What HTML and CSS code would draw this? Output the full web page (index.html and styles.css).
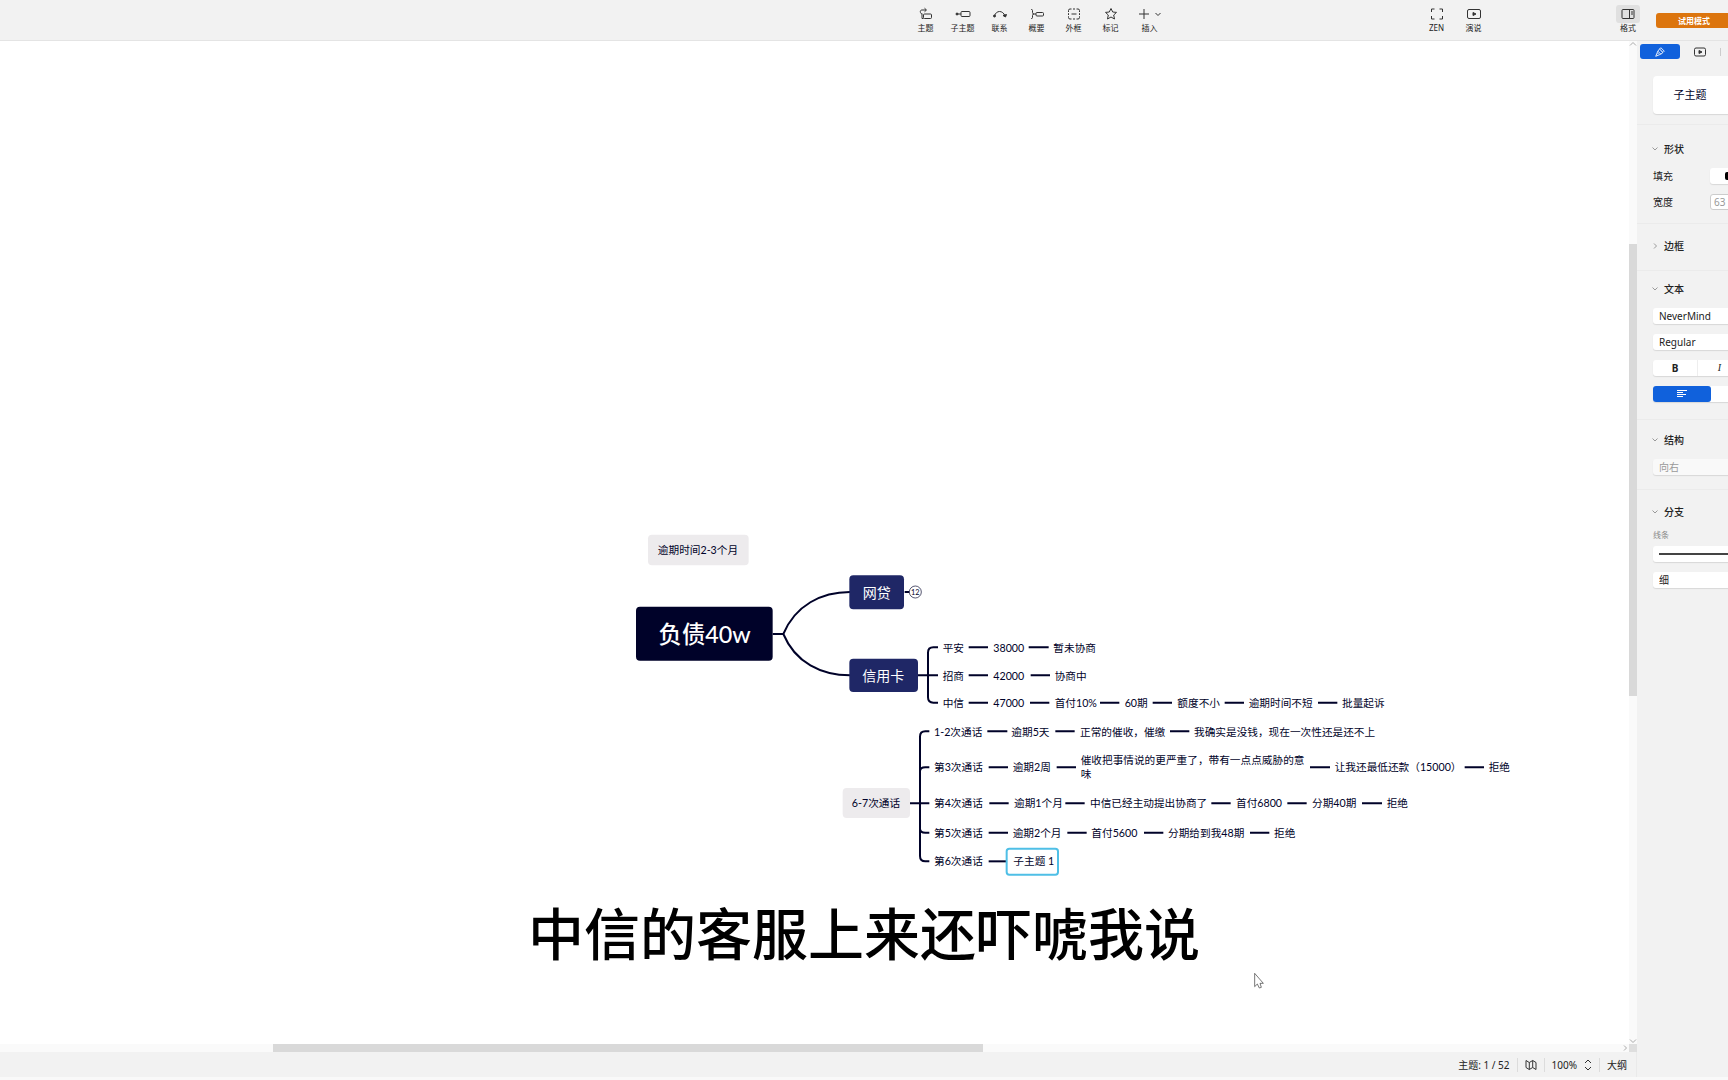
FILE: index.html
```html
<!DOCTYPE html>
<html lang="zh-CN">
<head>
<meta charset="utf-8">
<title>负债40w</title>
<link rel="stylesheet" href="styles.css">
</head>
<body>
<div class="app">
  <header class="toolbar">
    <div class="tool-group">
      <button class="tool"><svg class="icon" viewBox="0 0 16 14"><path d="M4 6.500V11.500H5.500M4 7C2 6.500 1.500 3 4 3H8M6.500 1.200 8.500 3 6.500 4.800"/><rect x="5.500" y="7" width="8" height="4.500" rx="1"/></svg>主题</button>
      <button class="tool"><svg class="icon" viewBox="0 0 16 14"><rect x="6" y="4.500" width="9" height="5" rx="1"/><path d="M2 7H6"/><circle class="solid" cx="2" cy="7" r="1"/></svg>子主题</button>
      <button class="tool"><svg class="icon" viewBox="0 0 16 14"><path d="M2.500 9C4 3 11 3 13 9"/><circle class="solid" cx="2.500" cy="9" r="1"/><path class="solid" d="M11 8.500 14.500 7.500 13.500 10Z"/></svg>联系</button>
      <button class="tool"><svg class="icon" viewBox="0 0 16 14"><path d="M2 2.500H2.500Q3.500 2.500 3.500 3.500V5.500Q3.500 7 5 7Q3.500 7 3.500 8.500V10.500Q3.500 11.500 2.500 11.500H2M5 7H7"/><rect x="7" y="5.500" width="7.500" height="3.500" rx="1"/></svg>概要</button>
      <button class="tool"><svg class="icon" viewBox="0 0 16 14"><path d="M2.500 5V3.500Q2.500 2 4 2H5.500M7 2H9M10.500 2H12Q13.500 2 13.500 3.500V5M13.500 6.200V8M13.500 9.300V10.500Q13.500 12 12 12H10.500M9 12H7M5.500 12H4Q2.500 12 2.500 10.500V9.300M2.500 8V6.200M5.500 7H10.500"/></svg>外框</button>
      <button class="tool"><svg class="icon" viewBox="0 0 16 14"><path d="M8 1.500 9.700 5 13.500 5.400 10.700 8 11.500 12 8 10 4.500 12 5.300 8 2.500 5.400 6.300 5Z"/></svg>标记</button>
      <button class="tool tool-insert"><svg class="icon icon-wide" viewBox="0 0 24 14"><path d="M1 7H11M6 2V12M17.500 6 20 8.500 22.500 6"/></svg>插入</button>
    </div>
    <div class="tool-group view-group">
      <button class="tool"><svg class="icon" viewBox="0 0 16 14"><path d="M2.500 5V2H5.500M10.500 2H13.500V5M13.500 9V12H10.500M5.500 12H2.500V9"/></svg>ZEN</button>
      <button class="tool"><svg class="icon" viewBox="0 0 16 14"><rect x="1.500" y="2.500" width="13" height="9" rx="1.500"/><path class="solid" d="M7 5.500 10 7 7 8.500Z"/></svg>演说</button>
    </div>
    <button class="tool tool-active"><svg class="icon" viewBox="0 0 16 14"><rect x="2" y="2.500" width="12" height="9" rx="1"/><path d="M9.500 2.500V11.500M11 5H13M11 7H13"/></svg>格式</button>
    <div class="trial-slot"><button class="trial">试用模式</button></div>
  </header>

  <div class="work">
    <div class="editor">
      <main class="canvas">
        <svg class="map" viewBox="0 63 2442 1503" width="1628" height="1002">
          <g class="links">
            <path d="M1159 951H1175M1175 951C1193 908 1232 888 1275 888M1175 951C1193 994 1232 1013 1275 1013"/>
            <path d="M1357 888H1364M1377 1013H1407M1407 971H1400Q1392 971 1392 979V1046Q1392 1054 1400 1054H1407"/>
            <path d="M1453 971H1482M1543 971H1573"/>
            <path d="M1453 1013H1482M1546 1013H1575"/>
            <path d="M1453 1054H1482M1545 1054H1574M1650 1054H1679M1729 1054H1758M1837 1054H1866M1977 1054H2006"/>
            <path d="M1365 1205H1394M1394 1097H1388Q1380 1097 1380 1105V1284Q1380 1292 1388 1292H1394M1380 1157Q1380 1151 1388 1151H1394M1380 1243Q1380 1249 1388 1249H1394"/>
            <path d="M1481 1097H1511M1583 1097H1612M1755 1097H1784"/>
            <path d="M1483 1151H1512M1585 1151H1614M1965 1151H1995M2197 1151H2226"/>
            <path d="M1484 1205H1513M1598 1205H1627M1817 1205H1846M1931 1205H1960M2043 1205H2073"/>
            <path d="M1483 1249H1512M1601 1249H1630M1716 1249H1745M1875 1249H1904"/>
            <path d="M1483 1292H1512"/>
          </g>
          <rect class="note" x="972" y="802" width="151" height="46" rx="6"/>
          <text class="topic mid" x="1047" y="831">逾期时间2-3个月</text>
          <rect class="root-box" x="954" y="910" width="205" height="81" rx="6"/>
          <text class="root-text mid" x="1057" y="964">负债40w</text>
          <rect class="main-box" x="1274" y="863" width="82" height="51" rx="6"/>
          <text class="main-text mid" x="1315" y="897">网贷</text>
          <circle class="fold" cx="1373" cy="888" r="9"/>
          <text class="fold-text mid" x="1373" y="892">12</text>
          <rect class="main-box" x="1274" y="988" width="103" height="50" rx="6"/>
          <text class="main-text mid" x="1325" y="1021">信用卡</text>
          <g class="topic">
            <text x="1414" y="978">平安</text><text x="1490" y="978">38000</text><text x="1580" y="978">暂未协商</text>
            <text x="1414" y="1020">招商</text><text x="1490" y="1020">42000</text><text x="1582" y="1020">协商中</text>
            <text x="1414" y="1061">中信</text><text x="1490" y="1061">47000</text><text x="1582" y="1061">首付10%</text><text x="1687" y="1061">60期</text><text x="1766" y="1061">额度不小</text><text x="1873" y="1061">逾期时间不短</text><text x="2013" y="1061">批量起诉</text>
          </g>
          <rect class="note" x="1264" y="1182" width="101" height="45" rx="6"/>
          <text class="topic mid" x="1314" y="1211">6-7次通话</text>
          <g class="topic">
            <text x="1401" y="1104">1-2次通话</text><text x="1517" y="1104">逾期5天</text><text x="1620" y="1104">正常的催收，催缴</text><text x="1791" y="1104">我确实是没钱，现在一次性还是还不上</text>
            <text x="1401" y="1157">第3次通话</text><text x="1519" y="1157">逾期2周</text>
            <text x="1621" y="1146">催收把事情说的更严重了，带有一点点威胁的意<tspan x="1621" y="1167">味</tspan></text>
            <text x="2002" y="1157">让我还最低还款（15000）</text><text x="2233" y="1157">拒绝</text>
            <text x="1401" y="1211">第4次通话</text><text x="1521" y="1211">逾期1个月</text><text x="1635" y="1211">中信已经主动提出协商了</text><text x="1854" y="1211">首付6800</text><text x="1968" y="1211">分期40期</text><text x="2080" y="1211">拒绝</text>
            <text x="1401" y="1255">第5次通话</text><text x="1519" y="1255">逾期2个月</text><text x="1637" y="1255">首付5600</text><text x="1752" y="1255">分期给到我48期</text><text x="1911" y="1255">拒绝</text>
            <text x="1401" y="1298">第6次通话</text>
          </g>
          <rect class="selected" x="1510" y="1273" width="77" height="39" rx="4"/>
          <text class="topic" x="1520" y="1298">子主题 1</text>
          <path class="cursor" d="M1882 1460V1480L1886 1476 1889 1482 1892 1481 1890 1475H1895Z"/>
        </svg>
      </main>
      <div class="vbar"><svg class="arrow" viewBox="0 0 8 6"><path d="M1 4.500 4 1.500 7 4.500"/></svg><div class="vspace"></div><div class="vthumb"></div><div class="vrest"></div><svg class="arrow" viewBox="0 0 8 6"><path d="M1 1.500 4 4.500 7 1.500"/></svg></div>
      <div class="hbar"><div class="hthumb"></div><svg class="arrow" viewBox="0 0 8 6"><path d="M3 0.500 5.500 3 3 5.500"/></svg></div>
      <div class="corner"></div>
      <footer class="status">
        <span class="cell">主题: 1 / 52</span>
        <button class="cell" aria-label="导航图"><svg class="map-icon" viewBox="0 0 12 12"><path d="M1 1.500 4.300 3.500 7.700 1.500V8.500L4.300 10.500 1 8.500ZM4.300 3.500V10.500M7.700 1.500 11 3.500V10.500L7.700 8.500"/></svg></button>
        <button class="cell zoom-level">100%<svg class="updown" viewBox="0 0 8 12"><path d="M1 4 4 1 7 4M1 8 4 11 7 8"/></svg></button>
        <button class="cell">大纲</button>
      </footer>
    </div>

    <aside class="side">
      <div class="side-body">
        <div class="tabs">
          <button class="tab tab-on" aria-label="样式"><svg class="tab-icon" viewBox="0 0 14 14"><path d="M8 2 12 6 10.500 7.500 6.500 3.500ZM6.500 3.500 4.500 6 8 9.500 10.500 7.500M4.500 6 2 12 8 9.500M4 9.500 5.500 8M8 5.500 9 6.500"/></svg></button>
          <button class="tab" aria-label="演说"><svg class="icon" viewBox="0 0 16 14"><rect x="2.500" y="3" width="11" height="8" rx="1.500"/><path class="solid" d="M7 5.500 10 7 7 8.500Z"/></svg></button>
          <span class="tab-sep"></span>
        </div>
        <button class="preview">子主题</button>
        <section class="sec sec-shape">
          <h2 class="head"><svg class="chev" viewBox="0 0 8 6"><path d="M1.500 1.500 4 4 6.500 1.500"/></svg>形状</h2>
          <div class="row"><span class="name">填充</span><button class="swatch" aria-label="填充颜色"><span class="ink"></span></button></div>
          <div class="row"><label class="name" for="w">宽度</label><input class="num" id="w" value="63"></div>
        </section>
        <section class="sec sec-border">
          <h2 class="head"><svg class="chev" viewBox="0 0 8 6"><path d="M3 .500 5.500 3 3 5.500"/></svg>边框</h2>
        </section>
        <section class="sec sec-text">
          <h2 class="head"><svg class="chev" viewBox="0 0 8 6"><path d="M1.500 1.500 4 4 6.500 1.500"/></svg>文本</h2>
          <div class="row"><select class="field" aria-label="字体"><option>NeverMind</option></select></div>
          <div class="row"><select class="field" aria-label="字重"><option>Regular</option></select></div>
          <div class="row"><div class="segs"><button class="seg bold">B</button><button class="seg italic">I</button></div></div>
          <div class="row"><div class="segs"><button class="align-on" aria-label="左对齐"><svg class="lines" viewBox="0 0 12 8"><path d="M1 .500H11M1 2.500H7M1 4.500H10M1 6.500H7"/></svg></button></div></div>
        </section>
        <section class="sec sec-struct">
          <h2 class="head"><svg class="chev" viewBox="0 0 8 6"><path d="M1.500 1.500 4 4 6.500 1.500"/></svg>结构</h2>
          <div class="row"><select class="field" aria-label="结构" disabled><option>向右</option></select></div>
        </section>
        <section class="sec sec-branch">
          <h2 class="head"><svg class="chev" viewBox="0 0 8 6"><path d="M1.500 1.500 4 4 6.500 1.500"/></svg>分支</h2>
          <div class="hint">线条</div>
          <div class="row"><button class="field" aria-label="线条样式"><span class="stroke"></span></button></div>
          <div class="row"><select class="field" aria-label="粗细"><option>细</option></select></div>
        </section>
      </div>
    </aside>
  </div>
  <p class="caption">中信的客服上来还吓唬我说</p>
</div>
</body>
</html>
```

FILE: styles.css
```css
* { box-sizing: border-box; }
body {
  margin: 0;
  background: #f9f9f9;
  color: #222;
  font: 10px/16px "Noto Sans", "Noto Sans CJK SC", sans-serif;
}
button, input, select {
  margin: 0;
  padding: 0;
  border: 0;
  background: none;
  color: inherit;
  font: inherit;
}
svg { fill: none; stroke: #333; }
.solid { fill: #333; }

.app {
  position: relative;
  display: flex;
  flex-direction: column;
  min-height: 100vh;
  padding-bottom: 3px;
  overflow: hidden;
}

/* top toolbar */
.toolbar {
  display: flex;
  justify-content: flex-end;
  height: 41px;
  background: #f2f2f2;
  border-bottom: 1px solid #e4e4e4;
  overflow: hidden;
}
.tool-group { display: flex; }
.view-group { margin: 0 118px 0 248px; }
.tool {
  display: flex;
  flex-direction: column;
  align-items: center;
  width: 37px;
  padding-top: 7px;
  font-size: 8px;
  line-height: 12px;
  white-space: nowrap;
}
.tool-insert { width: 41px; }
.icon { width: 16px; height: 14px; margin-bottom: 1px; }
.icon-wide { width: 24px; }
.tool-active { width: 36px; padding-top: 5px; }
.tool-active .icon {
  width: 24px;
  height: 18px;
  margin: 0 0 -1px;
  padding: 2px 4px;
  border-radius: 3px;
  background: #e0e0e0;
}
.trial-slot { flex: none; width: 82px; padding: 13px 0 0 10px; }
.trial {
  display: block;
  width: 76px;
  height: 15px;
  border-radius: 3px;
  background: #dc750e;
  color: #fff;
  font-size: 8px;
  font-weight: 700;
  line-height: 15px;
}

/* canvas with its scroll bars */
.work { display: flex; flex: 1; }
.editor {
  display: grid;
  grid-template-columns: minmax(0, 1fr) 8px;
  grid-template-rows: minmax(0, 1fr) 8px 25px;
  flex: 1;
  min-width: 0;
}
.canvas { padding-top: 1px; background: #fff; overflow: hidden; }
.map { display: block; }
.vbar { display: flex; flex-direction: column; background: #fafafa; }
.vspace { flex: 197; }
.vthumb { flex: 451; background: #d9d9d9; }
.vrest { flex: 342; }
.arrow { width: 8px; height: 6px; stroke: #aaa; }
.hbar { display: flex; align-items: center; justify-content: space-between; background: #fafafa; }
.hthumb { width: 710px; height: 8px; margin-left: 273px; background: #d9d9d9; }
.corner { background: #dedede; }
.status {
  grid-column: 1 / -1;
  display: flex;
  justify-content: flex-end;
  align-items: center;
  background: #f2f2f2;
  border-right: 1px solid #eaeaea;
  padding: 1px 2px 0 0;
}
.cell { display: flex; align-items: center; height: 14px; padding: 0 7px; }
.cell + .cell { border-left: 1px solid #dcdcdc; }
.map-icon { width: 12px; height: 12px; }
.zoom-level { gap: 7px; }
.updown { width: 8px; height: 12px; }

/* mind map */
.links { stroke: #000229; stroke-width: 3; }
.map text { stroke: none; font-family: Lato, "Noto Sans CJK SC", sans-serif; }
.mid { text-anchor: middle; }
.topic { fill: #000229; font-size: 16px; }
.note { fill: #edebed; stroke: none; }
.root-box { fill: #000229; stroke: none; }
.main-box { fill: #1f2766; stroke: none; }
.root-text { fill: #fff; font-size: 35px; font-weight: 500; }
.main-text { fill: #fff; font-size: 21px; }
.fold { fill: #fff; stroke: #000229; stroke-width: 1; }
.fold-text { fill: #000229; font-size: 11px; }
.selected { fill: #fff; stroke: #4fbfe6; stroke-width: 3; }
.cursor { fill: #fff; stroke: #333; }
.caption {
  position: absolute;
  left: 0;
  right: 0;
  bottom: 109px;
  margin: 0;
  color: #000;
  font: 500 56px/80px "Noto Sans CJK SC", sans-serif;
  text-align: center;
  pointer-events: none;
}

/* format panel */
.side { flex: none; width: 91px; background: #f2f2f2; overflow: hidden; }
.side-body { width: 264px; padding: 3px 16px 0; }
.tabs { display: flex; align-items: center; height: 15px; margin-left: -13px; }
.tab { display: flex; justify-content: center; align-items: center; width: 40px; height: 15px; border-radius: 3px; }
.tab .icon { margin: 0; }
.tab-on { background: #1061dc; }
.tab-icon { width: 12px; height: 12px; stroke: #fff; }
.tab-sep { width: 1px; height: 8px; background: #ccc; }
.preview {
  display: block;
  width: 80px;
  height: 38px;
  margin: 17px 0 10px;
  padding-right: 6px;
  border-radius: 4px;
  background: #fff;
  box-shadow: 0 1px 1px #d8d8d8;
  color: #000229;
  font-size: 11px;
}
.sec { margin: 0 -16px; padding: 8px 16px; border-top: 1px solid #ebebeb; }
.sec-shape { padding-top: 14px; }
.sec-border { padding: 12px 16px 14px; }
.sec-text { padding-bottom: 12px; }
.sec-struct { padding: 10px 16px 9px; }
.sec-branch { padding-top: 12px; }
.head {
  display: flex;
  align-items: center;
  gap: 5px;
  height: 20px;
  margin: 0 0 4px -2px;
  font-size: 10px;
  font-weight: 500;
}
.sec-border .head { margin-bottom: 0; }
.chev { width: 8px; height: 6px; stroke: #999; }
.row { display: flex; align-items: center; height: 26px; }
.name { width: 57px; }
.swatch { width: 60px; height: 16px; padding-left: 15px; border-radius: 3px; background: #fff; box-shadow: 0 1px 1px #d8d8d8; }
.ink { display: block; width: 30px; height: 8px; border-radius: 2px; background: #000; }
.num { width: 60px; height: 16px; padding-left: 3px; border: 1px solid #ccc; border-radius: 3px; background: #fff; color: #999; }
.field {
  width: 232px;
  height: 16px;
  padding-left: 6px;
  border-radius: 3px;
  background: #fff;
  box-shadow: 0 1px 1px #d8d8d8;
  appearance: none;
}
.field:disabled { background: #f9f9f9; color: #999; opacity: 1; }
.segs { display: flex; width: 232px; height: 16px; border-radius: 3px; background: #fff; box-shadow: 0 1px 1px #d8d8d8; }
.seg { width: 44px; }
.seg + .seg { border-left: 1px solid #eee; }
.bold { font-weight: 700; }
.italic { font-family: "Liberation Serif", serif; font-style: italic; }
.align-on { display: flex; justify-content: center; align-items: center; width: 58px; border-radius: 3px; background: #1061dc; }
.lines { width: 12px; height: 8px; stroke: #fff; }
.hint { height: 12px; margin-top: 7px; color: #888; font-size: 8px; line-height: 12px; }
.stroke { display: block; height: 2px; background: #444; }
```
